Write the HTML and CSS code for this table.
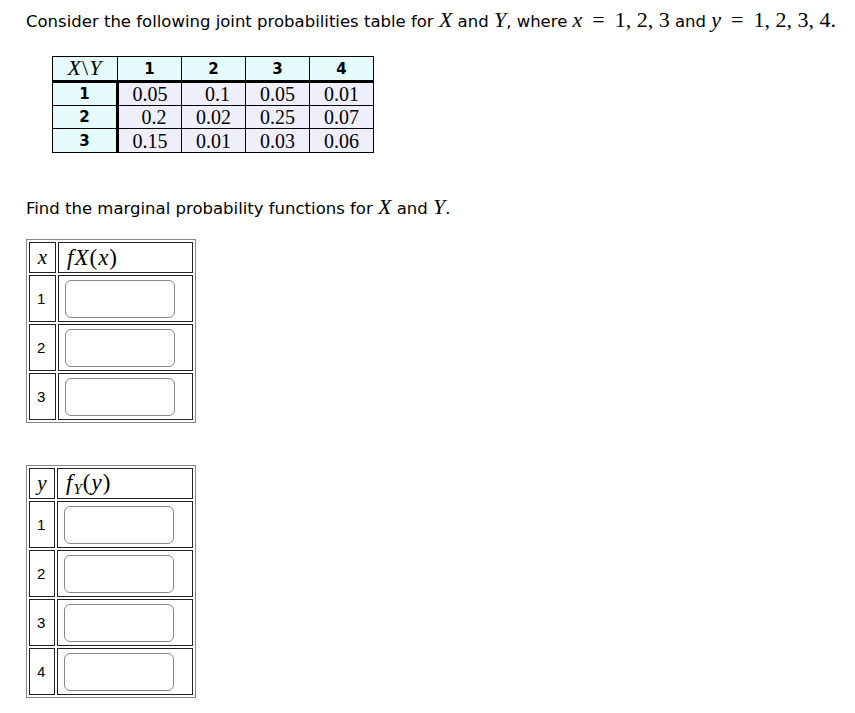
FILE: index.html
```html
<!DOCTYPE html>
<html>
<head>
<meta charset="utf-8">
<link rel="stylesheet" href="styles.css">
</head>
<body>
<div class="page">
  <p class="intro">Consider the following joint probabilities table for <span class="m"><i>X</i></span> and <span class="m"><i>Y</i></span>, where <span class="m"><i>x</i><span class="eq">=</span>1, 2, 3</span> and <span class="m"><i>y</i><span class="eq">=</span>1, 2, 3, 4.</span></p>
  <table class="joint">
    <tr class="hdr"><th class="corner"><span class="m"><i>X</i>\<i>Y</i></span></th><th>1</th><th>2</th><th>3</th><th>4</th></tr>
    <tr><th class="rh">1</th><td>0.05</td><td class="s">0.1</td><td>0.05</td><td>0.01</td></tr>
    <tr><th class="rh">2</th><td class="s">0.2</td><td>0.02</td><td>0.25</td><td>0.07</td></tr>
    <tr class="last"><th class="rh">3</th><td>0.15</td><td>0.01</td><td>0.03</td><td>0.06</td></tr>
  </table>
  <p class="find">Find the marginal probability functions for <span class="m"><i>X</i></span> and <span class="m"><i>Y</i></span>.</p>
  <table class="marg">
    <tr class="mh"><td class="c1"><span class="m"><i>x</i></span></td><td class="c2"><span class="m big"><i>f</i><i>X</i>(<i>x</i>)</span></td></tr>
    <tr><td class="c1 n">1</td><td class="c2"><div class="box"></div></td></tr>
    <tr><td class="c1 n">2</td><td class="c2"><div class="box"></div></td></tr>
    <tr><td class="c1 n">3</td><td class="c2"><div class="box"></div></td></tr>
  </table>
  <table class="marg my">
    <tr class="mh"><td class="c1"><span class="m"><i>y</i></span></td><td class="c2"><span class="m big"><i>f</i><sub><i>Y</i></sub>(<i>y</i>)</span></td></tr>
    <tr><td class="c1 n">1</td><td class="c2"><div class="box"></div></td></tr>
    <tr><td class="c1 n">2</td><td class="c2"><div class="box"></div></td></tr>
    <tr><td class="c1 n">3</td><td class="c2"><div class="box"></div></td></tr>
    <tr><td class="c1 n">4</td><td class="c2"><div class="box"></div></td></tr>
  </table>
</div>
</body>
</html>
```
FILE: styles.css
```css
html, body { margin: 0; padding: 0; background: #fff; }
.page {
  padding: 8px 0 0 26px;
  font-family: "DejaVu Sans", Verdana, sans-serif;
  font-size: 16.5px;
  color: #000;
}
.m { font-family: "Liberation Serif", "DejaVu Serif", serif; font-size: 22px; white-space: nowrap; }
.m i { font-style: italic; }
.eq { margin: 0 10px; }
.intro { margin: 0; line-height: 24px; white-space: nowrap; }
.joint {
  margin: 22px 0 0 26px;
  border-collapse: collapse;
  border: 1px solid #000;
}
.joint th, .joint td {
  border: 1px solid #000;
  height: 22px;
  padding: 0;
  text-align: center;
}
.joint .last th, .joint .last td { height: 23px; }
.joint .hdr th {
  background: #e6fbfb;
  font-family: "DejaVu Sans", sans-serif;
  font-weight: bold;
  font-size: 15px;
  width: 63px;
  height: 23px;
  line-height: 20px;
  border-bottom: 3px solid #000;
}
.joint .hdr th.corner { width: 64px; font-weight: normal; }
.joint .hdr th.corner .m { font-size: 22px; letter-spacing: 1px; line-height: 20px; }
.joint th.rh {
  background: #e6fbfb;
  font-size: 15px;
  font-weight: bold;
  border-right: 3px solid #000;
  line-height: 20px;
}
.joint td {
  background: #efeffb;
  font-family: "Liberation Serif", serif;
  font-size: 20px;
  line-height: 20px;
}
.joint td.s { padding-left: 8px; }
.find { margin: 42px 0 0 0; line-height: 24px; }
.marg {
  margin-top: 18px;
  border: 1px solid #888;
  border-spacing: 2px;
  table-layout: fixed;
  width: 170px;
}
.marg td {
  border: 1px solid #222;
  padding: 0;
}
.marg .mh td { height: 29px; }
.marg .mh .c1 { width: 25px; text-align: center; }
.my .mh .c1 { width: 24px; }
.marg .mh .c1 .m { font-size: 21px; }
.marg .c2 { padding: 4px 10px 3px 6px; }
.marg .mh .c2 { padding: 0 0 0 8px; }
.marg .n {
  font-family: "Liberation Sans", Arial, sans-serif;
  font-size: 15px;
  text-align: left;
  padding-left: 7px;
}
.box {
  width: 108px;
  height: 36px;
  border: 1px solid #888;
  border-radius: 6px;
  background: #fff;
}
.m.big { font-size: 23px; letter-spacing: 1px; }
.marg .m sub { font-size: 15px; vertical-align: -4px; }
.my { margin-top: 42px; }
```
